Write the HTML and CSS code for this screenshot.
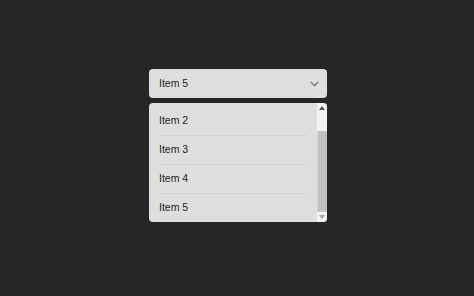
FILE: index.html
```html
<!DOCTYPE html>
<html lang="en">

<head>
    <meta charset="UTF-8">
    <meta name="viewport" content="width=device-width, initial-scale=1.0">
    <title>Select</title>
    <link rel="stylesheet" href="styles.css">
</head>

<body>
    <div class="select-wrap">
        <div class="select-box">
            <span class="selected">Item 5</span>
            <svg class="chevron" width="9" height="6" viewBox="0 0 9 6">
                <path d="M0.8 1 L4.5 4.7 L8.2 1" fill="none" stroke="#6a6a6a" stroke-width="1.1" />
            </svg>
        </div>

        <div class="dropdown">
            <ul class="options">
                <li class="option">Item 2</li>
                <li class="option">Item 3</li>
                <li class="option">Item 4</li>
                <li class="option">Item 5</li>
            </ul>
            <div class="scrollbar">
                <div class="sb-btn">
                    <svg width="6" height="4" viewBox="0 0 6 4"><path d="M0 4 L3 0 L6 4 Z" fill="#505050" /></svg>
                </div>
                <div class="sb-track">
                    <div class="sb-thumb"></div>
                </div>
                <div class="sb-btn">
                    <svg width="6" height="4" viewBox="0 0 6 4"><path d="M0 0 L3 4 L6 0 Z" fill="#a3a3a3" /></svg>
                </div>
            </div>
        </div>
    </div>
</body>

</html>
```

FILE: styles.css
```css
html,
body {
    height: 100%;
}

body {
    font-family: "Liberation Sans", Arial, sans-serif;
    background-color: #262626;
    margin: 0;
    display: flex;
    align-items: center;
    justify-content: center;
    color: #222;
}

.select-wrap {
    width: 178px;
    display: flex;
    flex-direction: column;
    gap: 5px;
    margin-left: 2px;
    margin-bottom: 5px;
}

.select-box {
    height: 29px;
    background-color: #dedede;
    border-radius: 4px;
    display: flex;
    align-items: center;
    justify-content: space-between;
    padding: 0 8px 2px 10px;
    box-sizing: border-box;
    font-size: 10.5px;
}

.chevron {
    margin-top: 2px;
}

.dropdown {
    display: flex;
    height: 119px;
    background-color: #dedede;
    border-radius: 4px;
    overflow: hidden;
}

.options {
    flex: 1;
    list-style: none;
    margin: 0;
    padding: 4px 0 0;
}

.option {
    height: 26px;
    line-height: 26px;
    padding-bottom: 2px;
    margin: 0 10px;
    font-size: 10.5px;
    border-bottom: 1px solid #d0d0d0;
}

.option:last-child {
    border-bottom: none;
}

.scrollbar {
    width: 10px;
    display: flex;
    flex-direction: column;
    background-color: #f3f3f3;
}

.sb-btn {
    height: 10px;
    display: flex;
    align-items: center;
    justify-content: center;
}

.sb-track {
    flex: 1;
    display: flex;
    flex-direction: column;
    justify-content: flex-end;
}

.sb-thumb {
    height: 81px;
    background-color: #c1c1c1;
    border-left: 1px solid #d6d6d6;
}
```
